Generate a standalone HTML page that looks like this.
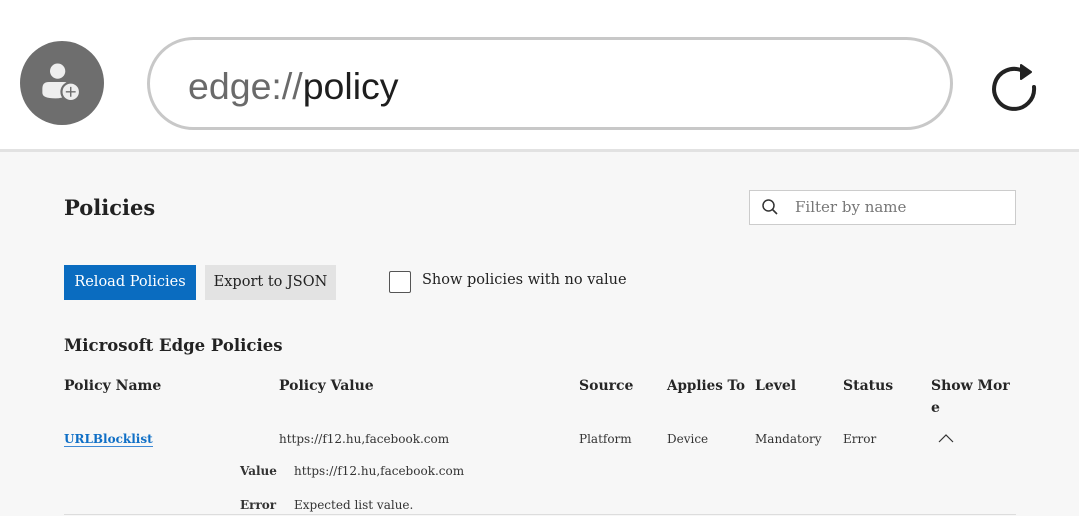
<!DOCTYPE html><html><head><meta charset="utf-8"><style>
*{margin:0;padding:0;box-sizing:border-box}
body{width:1079px;height:516px;overflow:hidden;background:#f7f7f7;font-family:"DejaVu Serif","Liberation Serif",serif;color:#222;position:relative}
.a{position:absolute;white-space:nowrap}
.top{position:absolute;left:0;top:0;width:1079px;height:152px;background:#fff;border-bottom:3px solid #e2e2e2}
.h{font-weight:bold;font-size:14px;color:#262626;top:378px}
.r{font-size:12px;color:#333}
</style></head><body>
<div class="top">
 <div class="a" style="left:20px;top:41px;width:84px;height:84px;border-radius:50%;background:#6e6e6e"></div>
 <svg class="a" style="left:38px;top:58px" width="48" height="48" viewBox="0 0 44 44">
  <circle cx="18" cy="12" r="7" fill="#eee"/>
  <path d="M4 28 q0-6 6-6 h14 q4 0 4 4 v8 q-6 3-12 3 q-12 0-12-5z" fill="#eee"/>
  <circle cx="30" cy="31" r="9.5" fill="#6e6e6e"/>
  <circle cx="30" cy="31" r="7.5" fill="#eee"/>
  <path d="M30 26.5v9M25.5 31h9" stroke="#6e6e6e" stroke-width="1.3"/>
 </svg>
 <div class="a" style="left:147px;top:37px;width:806px;height:93px;border:3px solid #c8c8c8;border-radius:47px"></div>
 <div class="a" style="left:188px;top:65px;font-family:'Liberation Sans',sans-serif;font-size:37.5px;color:#6a6a6a">edge://<span style="color:#1e1e1e">policy</span></div>
 <svg class="a" style="left:988px;top:61px" width="52" height="52" viewBox="0 0 52 52">
  <path d="M35 10 A20 20 0 1 0 46 26" fill="none" stroke="#222" stroke-width="4" stroke-linecap="round"/>
  <path d="M33 4 L43 11 L33 18 z" fill="#222" stroke="#222" stroke-width="2" stroke-linejoin="round"/>
 </svg>
</div>
<div class="a" style="left:64px;top:195px;font-size:21px;font-weight:bold">Policies</div>
<div class="a" style="left:749px;top:190px;width:267px;height:35px;background:#fff;border:1px solid #ccc"></div>
<svg class="a" style="left:761px;top:198px" width="18" height="18" viewBox="0 0 18 18"><circle cx="7.5" cy="7.5" r="5.5" fill="none" stroke="#333" stroke-width="1.5"/><path d="M11.5 11.5 16 16" stroke="#333" stroke-width="1.6"/></svg>
<div class="a" style="left:795px;top:198px;font-size:15px;color:#777">Filter by name</div>
<div class="a" style="left:64px;top:265px;width:132px;height:35px;background:#0a6cc0;color:#fff;font-size:14.5px;text-align:center;line-height:35px">Reload Policies</div>
<div class="a" style="left:205px;top:265px;width:131px;height:35px;background:#e3e3e3;color:#222;font-size:14.5px;text-align:center;line-height:35px">Export to JSON</div>
<div class="a" style="left:389px;top:271px;width:22px;height:22px;border:1.5px solid #555;border-radius:2px;background:#fff"></div>
<div class="a" style="left:422px;top:272px;font-size:14.5px">Show policies with no value</div>
<div class="a" style="left:64px;top:336px;font-size:16.5px;font-weight:bold">Microsoft Edge Policies</div>
<div class="a h" style="left:64px">Policy Name</div>
<div class="a h" style="left:279px">Policy Value</div>
<div class="a h" style="left:579px">Source</div>
<div class="a h" style="left:667px;font-size:13.5px">Applies To</div>
<div class="a h" style="left:755px">Level</div>
<div class="a h" style="left:843px">Status</div>
<div class="a h" style="left:931px;line-height:22px;top:375px">Show Mor<br>e</div>
<div class="a" style="left:64px;top:432px;font-size:12px;font-weight:bold;color:#0f6fc6;border-bottom:1.5px solid #3e8ad6">URLBlocklist</div>
<div class="a r" style="left:279px;top:432px">https://f12.hu,facebook.com</div>
<div class="a r" style="left:579px;top:432px">Platform</div>
<div class="a r" style="left:667px;top:432px">Device</div>
<div class="a r" style="left:755px;top:432px">Mandatory</div>
<div class="a r" style="left:843px;top:432px">Error</div>
<svg class="a" style="left:937px;top:433px" width="18" height="10" viewBox="0 0 18 10"><path d="M2 9 9 2 16 9" fill="none" stroke="#333" stroke-width="1.2"/></svg>
<div class="a r" style="left:240px;top:464px;font-weight:bold">Value</div>
<div class="a r" style="left:294px;top:464px">https://f12.hu,facebook.com</div>
<div class="a r" style="left:240px;top:498px;font-weight:bold">Error</div>
<div class="a r" style="left:294px;top:498px">Expected list value.</div>
<div class="a" style="left:64px;top:514px;width:952px;height:1px;background:#ddd"></div>
</body></html>
